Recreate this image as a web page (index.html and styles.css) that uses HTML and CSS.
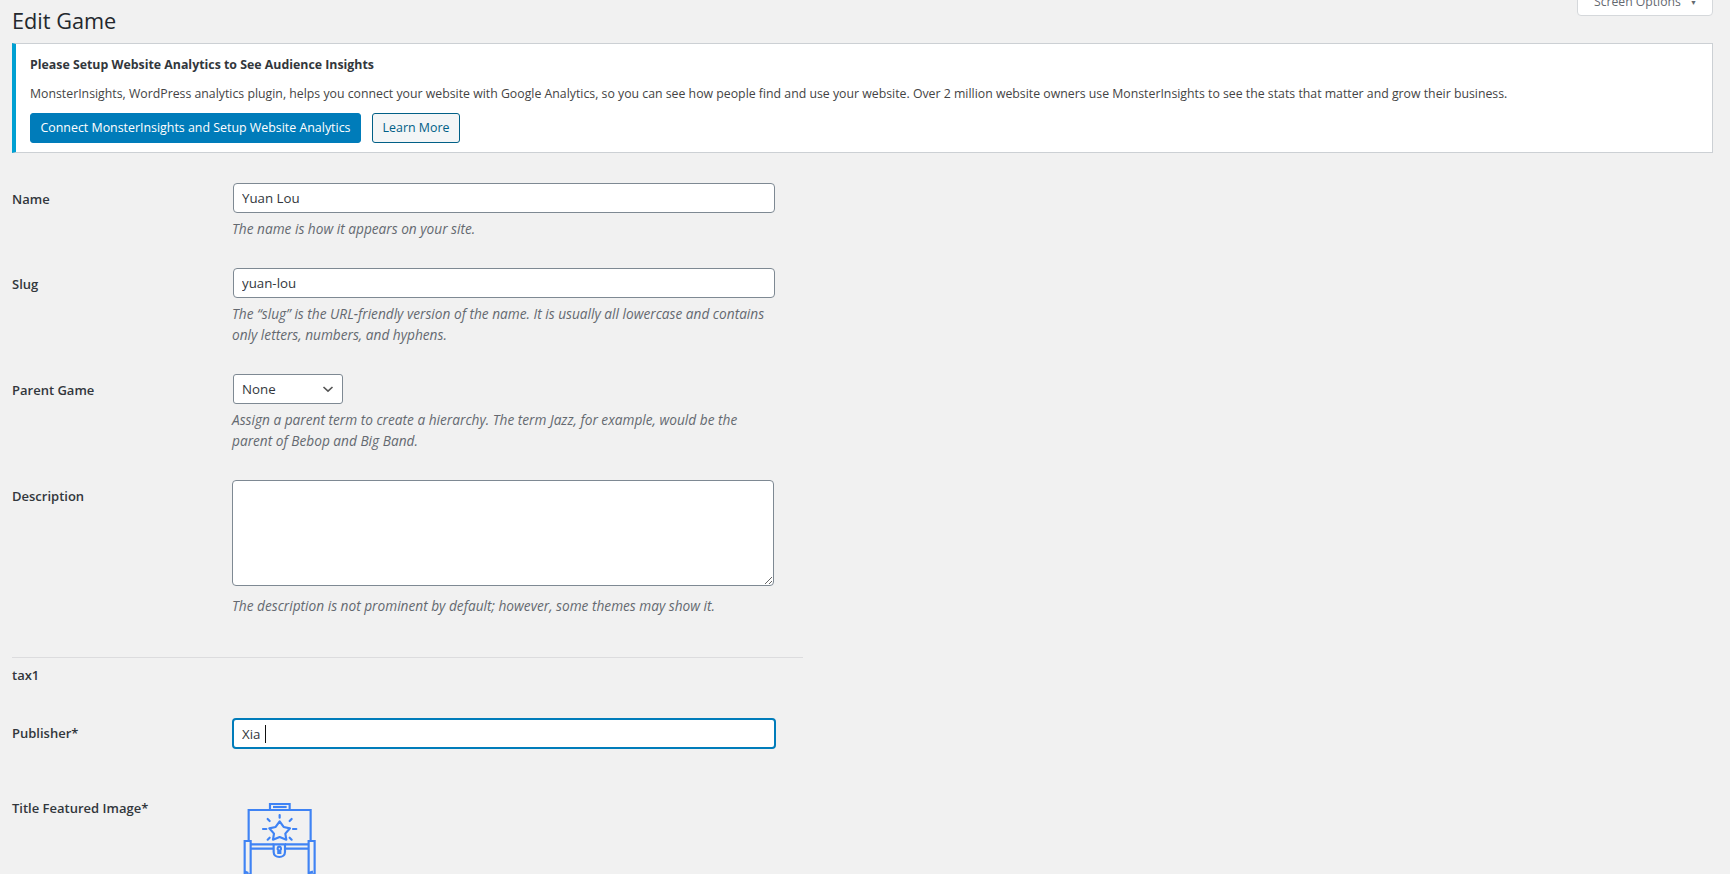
FILE: index.html
```html
<!DOCTYPE html>
<html lang="en">
<head>
<meta charset="utf-8">
<title>Edit Game</title>
<link rel="stylesheet" href="styles.css">
</head>
<body>
<div class="screen-tab">Screen Options <span class="tab-arrow">▼</span></div>
<h1 class="title">Edit Game</h1>
<div class="notice">
  <p class="notice-title">Please Setup Website Analytics to See Audience Insights</p>
  <p class="notice-text">MonsterInsights, WordPress analytics plugin, helps you connect your website with Google Analytics, so you can see how people find and use your website. Over 2 million website owners use MonsterInsights to see the stats that matter and grow their business.</p>
  <div class="notice-actions">
    <a class="btn btn-primary">Connect MonsterInsights and Setup Website Analytics</a>
    <a class="btn btn-secondary">Learn More</a>
  </div>
</div>
<form class="form">
  <div class="row">
    <label class="label">Name</label>
    <div class="field">
      <input class="input" type="text" value="Yuan Lou">
      <p class="desc">The name is how it appears on your site.</p>
    </div>
  </div>
  <div class="row">
    <label class="label">Slug</label>
    <div class="field">
      <input class="input" type="text" value="yuan-lou">
      <p class="desc">The “slug” is the URL-friendly version of the name. It is usually all lowercase and contains only letters, numbers, and hyphens.</p>
    </div>
  </div>
  <div class="row">
    <label class="label">Parent Game</label>
    <div class="field">
      <select class="select"><option>None</option></select>
      <p class="desc">Assign a parent term to create a hierarchy. The term Jazz, for example, would be the parent of Bebop and Big Band.</p>
    </div>
  </div>
  <div class="row">
    <label class="label label-area">Description</label>
    <div class="field">
      <textarea class="textarea"></textarea>
      <p class="desc desc-area">The description is not prominent by default; however, some themes may show it.</p>
    </div>
  </div>
  <hr class="rule">
  <p class="section-name">tax1</p>
  <div class="row row-publisher">
    <label class="label">Publisher*</label>
    <div class="field field-focus">
      <input class="input input-focus" type="text" value="Xia">
      <span class="caret"></span>
    </div>
  </div>
  <div class="row row-image">
    <label class="label">Title Featured Image*</label>
    <div class="field">
      <svg class="chest" viewBox="130 185 220 217" fill="none" stroke="#3f83f4" stroke-width="6.5">
        <path d="M211 208V191H270V208"/>
        <path d="M220 200H261"/>
        <path d="M147 300V209H333V300"/>
        <path d="M240 243L252 260L271 264L257 280L260 298L240 290L220 298L223 280L209 264L228 260Z" stroke-linejoin="round"/>
        <path d="M240 224V232M204 236L210 242M276 236L270 242M190 266H200M280 266H290M204 298L210 292M276 298L270 292" stroke-linecap="round"/>
        <path d="M135 302H153V402H135ZM327 302H345V402H327Z"/>
        <path d="M153 312H222M256 312H327M153 325H222M256 325H327"/>
        <path d="M222 312H256V335C256 345 248 350 239 350C230 350 222 345 222 335Z"/>
        <path d="M236 338V330C232 326 234 319 239 319C244 319 246 326 242 330V338Z"/>
        <path d="M135 394L146 398M327 398L340 394"/>
      </svg>
    </div>
  </div>
</form>
</body>
</html>
```
FILE: styles.css
```css
* { box-sizing: border-box; }
html, body { height: 874px; overflow: hidden; }
body {
  margin: 0;
  background: #f1f1f1;
  color: #444;
  font-family: "Open Sans", "Noto Sans", sans-serif;
  font-size: 12.31px;
  line-height: 21px;
}
.screen-tab {
  position: absolute;
  top: -15px;
  left: 1577px;
  width: 136px;
  height: 31px;
  padding: 5px 0 0 16px;
  background: #fff;
  border: 1px solid #d5d8db;
  border-radius: 0 0 4px 4px;
  color: #646970;
  font-size: 12.2px;
}
.tab-arrow { font-size: 7px; margin-left: 6px; vertical-align: 1px; }
.title {
  margin: 0;
  padding: 6px 0 0 12px;
  height: 43px;
  font-size: 21.7px;
  font-weight: 400;
  line-height: 30px;
  color: #23282d;
}
.notice {
  margin: 0 17px 0 12px;
  height: 110px;
  padding: 10px 14px 0;
  background: #fff;
  border: 1px solid #ccd0d4;
  border-left: 4px solid #00a0d2;
}
.notice-title { margin: 0; font-weight: 700; color: #32373c; font-size: 12.35px; }
.notice-text { margin: 8px 0 0; white-space: nowrap; }
.notice-actions { display: flex; gap: 11px; margin-top: 9px; }
.btn {
  display: block;
  height: 30px;
  border-radius: 3px;
  font-size: 12.4px;
  line-height: 28px;
  text-align: center;
  white-space: nowrap;
}
.btn-primary { width: 331px; background: #007cba; border: 1px solid #007cba; color: #fff; }
.btn-secondary { width: 88px; background: #f3f5f6; border: 1px solid #016087; color: #016087; }
.form { margin: 30px 0 0 12px; }
.row { display: grid; grid-template-columns: 221px 545px; margin-bottom: 30px; }
.label { font-weight: 600; font-size: 13px; color: #32373c; padding-top: 6px; }
.field { position: relative; }
.input {
  display: block;
  width: 542px;
  height: 30px;
  padding: 0 8px;
  border: 1px solid #7e8993;
  border-radius: 4px;
  background: #fff;
  color: #32373c;
  font: 13.3px "Open Sans", "Noto Sans", sans-serif;
  outline: none;
}
.desc {
  margin: 4.5px 0 -0.5px -1px;
  width: 542px;
  font-size: 13.68px;
  font-style: italic;
  color: #646970;
}
.select {
  display: block;
  width: 110px;
  height: 30px;
  padding: 0 24px 0 8px;
  appearance: none;
  border: 1px solid #7e8993;
  border-radius: 3px;
  background: #fff url("data:image/svg+xml,%3Csvg xmlns='http://www.w3.org/2000/svg' width='12' height='8' viewBox='0 0 12 8'%3E%3Cpath d='M1.5 2L6 6.2L10.5 2' fill='none' stroke='%23555' stroke-width='1.6'/%3E%3C/svg%3E") no-repeat right 8px center;
  color: #32373c;
  font: 13.3px "Open Sans", "Noto Sans", sans-serif;
}
.textarea {
  display: block;
  width: 542px;
  height: 106px;
  margin-left: -1px;
  border: 1px solid #7e8993;
  border-radius: 4px;
  background: #fff;
  outline: none;
}
.desc-area { margin-top: 9px; width: 560px; }
.rule {
  width: 791px;
  margin: 0;
  border: 0;
  border-top: 1px solid #dcdcde;
  position: relative;
  top: 11.5px;
}
.section-name { margin: 18px 0 0; font-weight: 600; font-size: 13px; color: #32373c; }
.row-publisher { margin-top: 32.5px; margin-bottom: 0; }
.row-publisher .label { padding-top: 5px; }
.input-focus {
  width: 544px;
  height: 31px;
  margin-left: -1px;
  border: 2px solid #007cba;
  padding-left: 8px;
}
.caret {
  position: absolute;
  left: 32px;
  top: 7px;
  width: 1px;
  height: 18px;
  background: #111;
}
.row-image { margin-top: 49px; }
.row-image .label { padding-top: 0; }
.chest { display: block; width: 73.3px; height: 72.3px; margin: 4px 0 0 10px; }
```
